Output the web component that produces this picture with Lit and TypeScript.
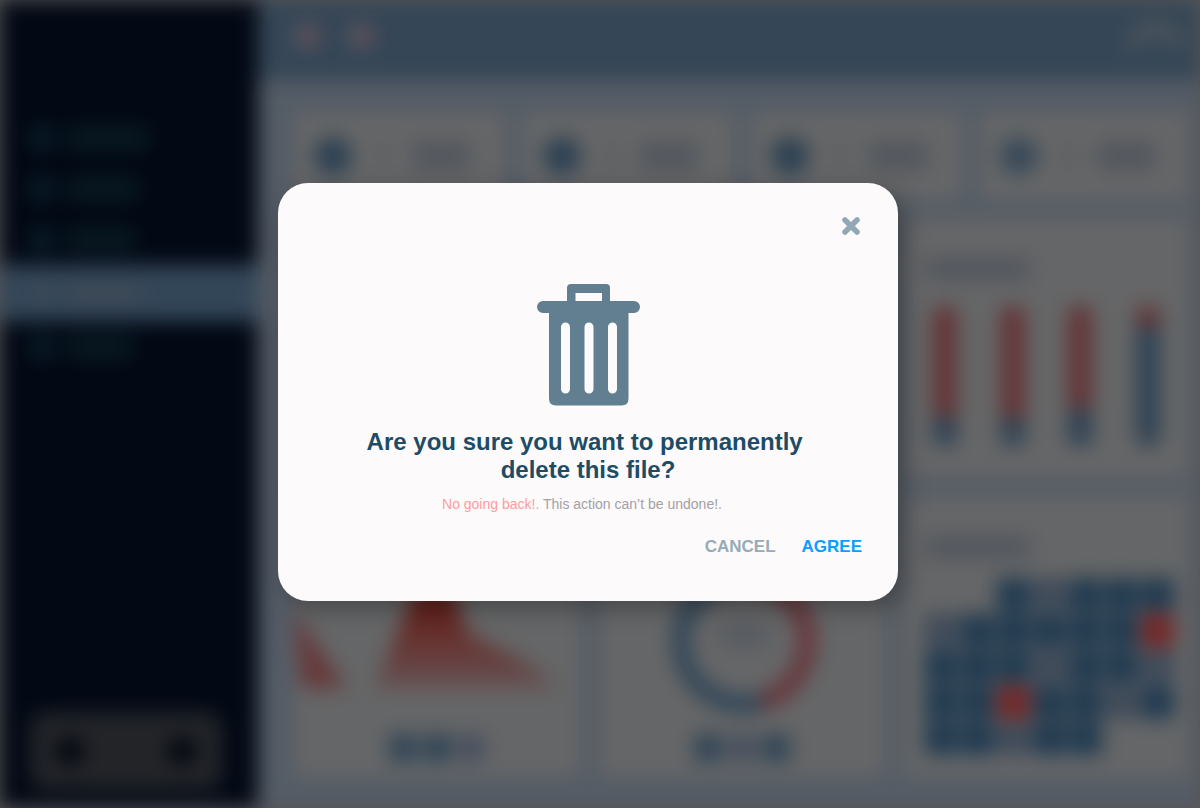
import { LitElement, html, css } from "lit";
import { customElement, state } from "lit/decorators.js";
import { classMap } from "lit/directives/class-map.js";
import { styleMap } from "lit/directives/style-map.js";

const NAV_WIDTHS = [84, 74, 70, 76, 68];
const ACTIVE_NAV = 3;
const STAT_TONES = ["", "", "", "soft"];
const BARS = [79, 80, 73, 14];

/* One character per day: "." empty, "b" booked, "l" light, "r" red. */
const CALENDAR = ["..blbbb", "lbbbbbr", "bbblbbl", "bbrbblb", "bblbb.."];

@customElement("dashboard-backdrop")
export class DashboardBackdrop extends LitElement {
  static styles = css`
    :host {
      display: flex;
      min-height: 100vh;
      filter: blur(10px);
      background: #545c66;
    }
    .side {
      flex: none;
      width: 258px;
      box-sizing: border-box;
      display: flex;
      flex-direction: column;
      padding: 112px 0 18px;
      background: #020814;
    }
    .nav {
      display: flex;
      align-items: center;
      gap: 12px;
      height: 51px;
      padding-left: 30px;
    }
    .nav.active {
      height: 56px;
      background: #334658;
    }
    .dot {
      width: 24px;
      height: 24px;
      border-radius: 8px;
      background: #081f2a;
    }
    .line {
      height: 24px;
      border-radius: 8px;
      background: #071921;
    }
    .active .dot,
    .active .line {
      height: 14px;
      background: #434b56;
    }
    .upgrade {
      display: flex;
      justify-content: space-between;
      align-items: center;
      height: 78px;
      margin: auto 36px 0 30px;
      padding: 0 26px;
      box-sizing: border-box;
      border-radius: 16px;
      background: #222428;
    }
    .knob {
      width: 28px;
      height: 28px;
      border-radius: 50%;
      background: #02060f;
    }
    .page {
      flex: 1;
      min-width: 0;
      display: flex;
      flex-direction: column;
    }
    .bar {
      flex: none;
      display: flex;
      align-items: center;
      gap: 28px;
      height: 80px;
      padding: 0 16px 8px 36px;
      box-sizing: border-box;
      background: #354656;
    }
    .bell {
      width: 26px;
      height: 24px;
      border-radius: 50%;
      background: linear-gradient(to right, #5a5a63, #6b4d56);
    }
    .user {
      margin-left: auto;
      width: 60px;
      height: 40px;
    }
    .grid {
      flex: 1;
      display: grid;
      grid-template-columns: repeat(12, minmax(0, 1fr));
      grid-template-rows: 88px 260fr 282fr;
      column-gap: 18px;
      row-gap: 18px;
      padding: 32px 10px 30px 36px;
    }
    .card {
      box-sizing: border-box;
      background: #656667;
      grid-column: span 4;
      display: flex;
      flex-direction: column;
      padding: 40px 22px 20px;
    }
    .stat {
      grid-column: span 3;
      flex-direction: row;
      align-items: center;
      padding: 0 34px 0 20px;
    }
    .disc {
      width: 38px;
      height: 38px;
      border-radius: 50%;
      background: #2c4052;
    }
    .disc.soft {
      background: #38495a;
    }
    .number {
      width: 14px;
      height: 28px;
      margin-left: 24px;
      background: #5b5f62;
    }
    .label {
      width: 60px;
      height: 32px;
      margin-left: auto;
      border-radius: 8px;
      background: #54585e;
    }
    .title {
      flex: none;
      width: 106px;
      height: 22px;
      border-radius: 8px;
      background: #52565d;
    }
    .bars {
      flex: 1;
      display: flex;
      justify-content: space-between;
      margin-top: 26px;
      padding: 0 8px;
    }
    .track {
      width: 24px;
      height: 140px;
      border-radius: 8px;
      overflow: hidden;
      background: #2f4254;
    }
    .fill {
      background: #643436;
    }
    .calendar {
      display: grid;
      grid-template-columns: repeat(7, 33px);
      grid-auto-rows: 33px;
      gap: 3px;
      margin-top: 20px;
    }
    .day.b {
      background: #203a50;
    }
    .day.l {
      background: #3f4a59;
    }
    .day.r {
      background: #742727;
    }
    .chart {
      padding: 84px 0 16px;
      justify-content: space-between;
      align-items: center;
    }
    .area {
      width: 100%;
      height: 116px;
    }
    .donut {
      width: 148px;
      height: 148px;
      margin-top: -14px;
    }
    .pages {
      display: flex;
      gap: 6px;
    }
    .pages .day {
      width: 28px;
      height: 28px;
      background: #304556;
    }
    .pages .pale {
      background: #474f5e;
    }
  `;

  private pager(pale: number) {
    return html`<div class="pages">
      ${[0, 1, 2].map((i) => html`<div class=${classMap({ day: true, pale: i === pale })}></div>`)}
    </div>`;
  }

  render() {
    return html`
      <div class="side">
        ${NAV_WIDTHS.map(
          (w, i) => html`<div class=${classMap({ nav: true, active: i === ACTIVE_NAV })}>
            <div class="dot"></div>
            <div class="line" style=${styleMap({ width: `${w}px` })}></div>
          </div>`
        )}
        <div class="upgrade"><div class="knob"></div><div class="knob"></div></div>
      </div>
      <div class="page">
        <div class="bar">
          <div class="bell"></div>
          <div class="bell"></div>
          <svg class="user" viewBox="0 0 60 40">
            <path d="M8 32Q14 12 32 12Q50 12 54 32" fill="none" stroke="#4d555c" stroke-width="15" />
          </svg>
        </div>
        <div class="grid">
          ${STAT_TONES.map(
            (tone) => html`<div class="card stat">
              <div class="disc ${tone}"></div>
              <div class="number"></div>
              <div class="label"></div>
            </div>`
          )}
          <div class="card"></div>
          <div class="card"></div>
          <div class="card">
            <div class="title"></div>
            <div class="bars">
              ${BARS.map(
                (p) => html`<div class="track">
                  <div class="fill" style=${styleMap({ height: `${p}%` })}></div>
                </div>`
              )}
            </div>
          </div>
          <div class="card chart">
            <svg class="area" viewBox="0 0 286 116" preserveAspectRatio="none">
              <path d="M0 30L52 108L8 108Z" fill="#66383a" />
              <path d="M80 108L122 8L158 8L174 54L225 78L266 108Z" fill="url(#heat)" />
              <defs>
                <linearGradient id="heat" x1="0" y1="0" x2="0" y2="1">
                  <stop offset="0" stop-color="#5e1612" />
                  <stop offset="0.5" stop-color="#66322e" />
                  <stop offset="1" stop-color="#645254" />
                </linearGradient>
              </defs>
            </svg>
            ${this.pager(2)}
          </div>
          <div class="card chart">
            <svg class="donut" viewBox="0 0 148 148">
              <circle cx="76" cy="75" r="63" fill="none" stroke="#2f4557" stroke-width="18" />
              <path d="M76 12A63 63 0 0 1 94 135.400" fill="none" stroke="#67353a" stroke-width="18" />
              <ellipse cx="76" cy="70" rx="28" ry="12" fill="#565a60" />
            </svg>
            ${this.pager(1)}
          </div>
          <div class="card">
            <div class="title"></div>
            <div class="calendar">
              ${CALENDAR.join("")
                .split("")
                .map((kind) => html`<div class="day ${kind === "." ? "" : kind}"></div>`)}
            </div>
          </div>
        </div>
      </div>
    `;
  }
}

@customElement("confirm-dialog")
export class ConfirmDialog extends LitElement {
  static styles = css`
    :host {
      display: block;
      width: 620px;
      max-width: 100%;
      box-sizing: border-box;
      padding: 32px 36px;
      border-radius: 30px;
      background: #fcfafb;
      box-shadow: 6px 8px 24px rgba(0, 0, 0, 0.3);
      font-family: "Liberation Sans", Arial, Helvetica, sans-serif;
      text-align: center;
    }
    button {
      display: block;
      margin: 0;
      padding: 0;
      border: 0;
      background: none;
      font: inherit;
      cursor: pointer;
    }
    .close {
      margin-left: auto;
      color: #90a7b5;
    }
    .close svg,
    .trash {
      display: block;
    }
    .trash {
      margin: 47px auto 22px;
    }
    h1 {
      margin: 0;
      font-size: 24px;
      line-height: 28px;
      font-weight: 700;
      color: #1c4c66;
    }
    p {
      margin: 10px 12px 0 0;
      font-size: 14px;
      line-height: 20px;
      color: #a3a1a2;
    }
    .warn {
      color: #ff9c9c;
    }
    .actions {
      display: flex;
      justify-content: flex-end;
      gap: 26px;
      padding: 23px 0 12px;
    }
    .actions button {
      font-size: 17px;
      line-height: 20px;
      font-weight: 700;
    }
    .actions .cancel {
      color: #97abb7;
    }
    .actions .agree {
      color: #0d9dff;
    }
  `;

  private choose(value: string) {
    this.dispatchEvent(new CustomEvent("choose", { detail: value, bubbles: true, composed: true }));
  }

  render() {
    return html`
      <button class="close" aria-label="Close" @click=${() => this.choose("close")}>
        <svg width="22" height="22" viewBox="0 0 22 22">
          <path d="M5 5L17 17M17 5L5 17" stroke="currentColor" stroke-width="5.500" stroke-linecap="round" />
        </svg>
      </button>
      <svg class="trash" width="104" height="122" viewBox="0 0 104 122" fill="#617f91" aria-hidden="true">
        <path
          fill-rule="evenodd"
          d="M31 17V4Q31 0 35 0H70Q74 0 74 4V17H98A6 6 0 0 1 98 29H92.500V114.500Q92.500 121.500 85.500 121.500H20Q13 121.500 13 114.500V29H7A6 6 0 0 1 7 17ZM39.500 9V17H66V9ZM25 43V105A4.500 4.500 0 0 0 34 105V43A4.500 4.500 0 0 0 25 43ZM48.500 43V105A4.500 4.500 0 0 0 57.500 105V43A4.500 4.500 0 0 0 48.500 43ZM72 43V105A4.500 4.500 0 0 0 81 105V43A4.500 4.500 0 0 0 72 43Z"
        />
      </svg>
      <h1>Are you sure you want to permanently&nbsp;<br />delete this file?</h1>
      <p><span class="warn">No going back!.</span> This action can’t be undone!.</p>
      <div class="actions">
        <button class="cancel" @click=${() => this.choose("cancel")}>CANCEL</button>
        <button class="agree" @click=${() => this.choose("agree")}>AGREE</button>
      </div>
    `;
  }
}

@customElement("app-root")
export class AppRoot extends LitElement {
  static styles = css`
    :host {
      display: block;
      position: relative;
      min-height: 100vh;
      overflow: hidden;
      background: #565658;
    }
    .overlay {
      position: absolute;
      inset: 0;
      display: flex;
      align-items: center;
      justify-content: center;
      padding: 0 24px 24px 0;
    }
  `;

  @state() private open = true;

  render() {
    return html`
      <dashboard-backdrop aria-hidden="true"></dashboard-backdrop>
      ${this.open
        ? html`<div class="overlay">
            <confirm-dialog role="dialog" aria-modal="true" @choose=${() => (this.open = false)}></confirm-dialog>
          </div>`
        : null}
    `;
  }
}
